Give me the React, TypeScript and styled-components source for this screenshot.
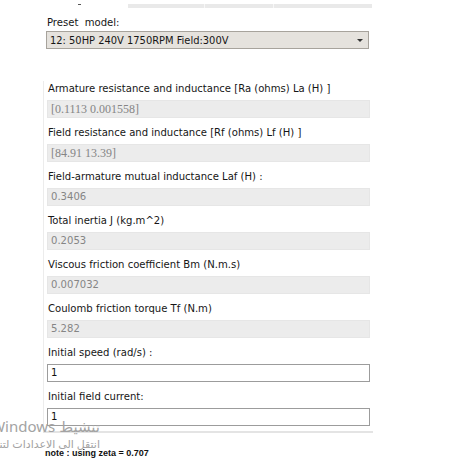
import React, { FunctionComponent } from "react";
import styled, { createGlobalStyle } from "styled-components";

const GlobalStyle = createGlobalStyle`
  html, body {
    margin: 0;
    padding: 0;
    background: #ffffff;
  }
  body {
    font-family: "DejaVu Sans Condensed", "DejaVu Sans", sans-serif;
    font-size: 11.2px;
    color: #161616;
  }
`;

const Page = styled.div`
  position: relative;
  width: 474px;
  height: 465px;
  overflow: hidden;
  padding-left: 43px;
  box-sizing: border-box;
`;

const TabStrip = styled.div`
  display: flex;
  margin-left: 85px;
  margin-top: 4px;
  width: 244px;
  height: 4px;
  background: #e9e9e9;
`;

const TabPiece = styled.div<{ $w: number }>`
  width: ${(p) => p.$w}px;
  height: 100%;
  border-right: 1px solid #f7f7f7;
`;

const Dash = styled.div`
  position: absolute;
  left: 78px;
  top: 4px;
  width: 3px;
  height: 1px;
  background: #555;
`;

const PresetLabel = styled.div`
  margin: 7px 0 0 4px;
  line-height: 16px;
  height: 16px;
`;

const SelectBox = styled.div`
  display: flex;
  align-items: center;
  justify-content: space-between;
  margin-left: 3px;
  width: 323px;
  height: 18px;
  box-sizing: border-box;
  border: 1px solid #a7a39c;
  background: #e5e2dd;
  padding: 0 5px 0 3px;
  font-size: 11px;
`;

const Arrow = styled.span`
  width: 0;
  height: 0;
  border-left: 3px solid transparent;
  border-right: 3px solid transparent;
  border-top: 3px solid #333;
`;

const Panel = styled.div`
  margin-top: 32px;
  width: 330px;
  border-left: 1px solid #ececec;
  border-bottom: 2px solid #e4e4e4;
  padding: 0 0 5px 3px;
  box-sizing: border-box;
`;

const Field = styled.div`
  display: flex;
  flex-direction: column;
  margin-bottom: 7px;
  &:last-child {
    margin-bottom: 0;
  }
`;

const Label = styled.div`
  line-height: 16px;
  height: 16px;
  margin: 0 0 3px 1px;
  white-space: nowrap;
`;

const Value = styled.div<{ $editable?: boolean; $serif?: boolean }>`
  width: 323px;
  height: 18px;
  box-sizing: border-box;
  line-height: 16px;
  padding-left: 3px;
  background: ${(p) => (p.$editable ? "#ffffff" : "#ececec")};
  border: 1px solid ${(p) => (p.$editable ? "#9c9c9c" : "#e6e6e6")};
  color: ${(p) => (p.$editable ? "#111" : "#858585")};
  font-family: ${(p) =>
    p.$serif ? '"Liberation Serif", serif' : "inherit"};
  font-size: ${(p) => (p.$serif ? "12px" : "11.2px")};
`;

const Note = styled.div`
  margin: 15px 0 0 2px;
  font-family: "Liberation Sans", Arial, sans-serif;
  font-weight: bold;
  font-size: 9px;
  color: #111;
`;

const Watermark = styled.div`
  position: absolute;
  right: 374px;
  top: 416px;
  width: 200px;
  direction: rtl;
  color: #a3a3a3;
  font-family: "Noto Sans", "DejaVu Sans", sans-serif;
  white-space: nowrap;
`;

const WatermarkTitle = styled.div`
  font-size: 15px;
  line-height: 20px;
`;

const WatermarkSub = styled.div`
  font-size: 11px;
  line-height: 16px;
`;

const fields = [
  { label: "Armature resistance and inductance [Ra (ohms) La (H) ]", value: "[0.1113 0.001558]", serif: true },
  { label: "Field resistance and inductance [Rf (ohms) Lf (H) ]", value: "[84.91 13.39]", serif: true },
  { label: "Field-armature mutual inductance Laf (H) :", value: "0.3406" },
  { label: "Total inertia J (kg.m^2)", value: "0.2053" },
  { label: "Viscous friction coefficient Bm (N.m.s)", value: "0.007032" },
  { label: "Coulomb friction torque Tf (N.m)", value: "5.282" },
  { label: "Initial speed (rad/s) :", value: "1", editable: true },
  { label: "Initial field current:", value: "1", editable: true },
];

const App: FunctionComponent = () => {
  return (
    <Page>
      <GlobalStyle />
      <Dash />
      <TabStrip>
        <TabPiece $w={76} />
        <TabPiece $w={68} />
      </TabStrip>
      <PresetLabel>Preset&nbsp; model:</PresetLabel>
      <SelectBox>
        <span>12: 50HP 240V 1750RPM Field:300V</span>
        <Arrow />
      </SelectBox>
      <Panel>
        {fields.map((f, idx) => (
          <Field key={idx}>
            <Label>{f.label}</Label>
            <Value $editable={f.editable} $serif={f.serif}>
              {f.value}
            </Value>
          </Field>
        ))}
      </Panel>
      <Note>note : using zeta = 0.707</Note>
      <Watermark>
        <WatermarkTitle>تنشيط Windows</WatermarkTitle>
        <WatermarkSub>انتقل الى الاعدادات لتنشيط Windows.</WatermarkSub>
      </Watermark>
    </Page>
  );
};

export default App;
